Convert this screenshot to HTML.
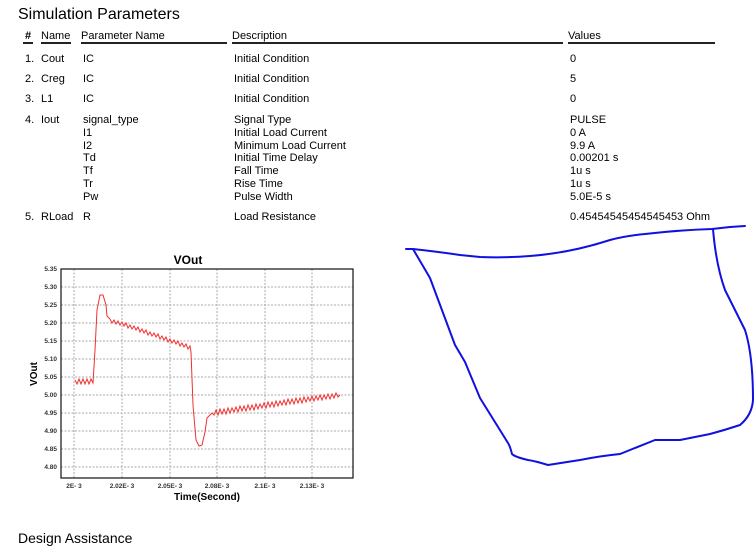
<!DOCTYPE html>
<html><head><meta charset="utf-8"><style>
body{margin:0;width:756px;height:536px;overflow:hidden;background:#fff;font-family:"Liberation Sans",Arial,sans-serif;color:#000;position:relative}
.t{position:absolute;font-size:11px;line-height:12.8px;white-space:nowrap}
.h{position:absolute;font-size:11px;top:30px}
.u{position:absolute;top:42px;height:1.5px;background:#222}
</style></head><body>
<div style="position:absolute;left:18px;top:6px;font-size:16px">Simulation Parameters</div>
<div class="h" style="left:25px;font-weight:bold">#</div>
<div class="h" style="left:41px">Name</div>
<div class="h" style="left:81px">Parameter Name</div>
<div class="h" style="left:232px">Description</div>
<div class="h" style="left:568px">Values</div>
<div class="u" style="left:23px;width:10px"></div>
<div class="u" style="left:41px;width:30px"></div>
<div class="u" style="left:81px;width:146px"></div>
<div class="u" style="left:232px;width:331px"></div>
<div class="u" style="left:568px;width:147px"></div>

<div class="t" style="left:25px;top:53px">1.</div><div class="t" style="left:41px;top:53px">Cout</div><div class="t" style="left:83px;top:53px">IC</div><div class="t" style="left:234px;top:53px">Initial Condition</div><div class="t" style="left:570px;top:53px">0</div>
<div class="t" style="left:25px;top:73px">2.</div><div class="t" style="left:41px;top:73px">Creg</div><div class="t" style="left:83px;top:73px">IC</div><div class="t" style="left:234px;top:73px">Initial Condition</div><div class="t" style="left:570px;top:73px">5</div>
<div class="t" style="left:25px;top:93px">3.</div><div class="t" style="left:41px;top:93px">L1</div><div class="t" style="left:83px;top:93px">IC</div><div class="t" style="left:234px;top:93px">Initial Condition</div><div class="t" style="left:570px;top:93px">0</div>
<div class="t" style="left:25px;top:114px">4.</div><div class="t" style="left:41px;top:114px">Iout</div>
<div class="t" style="left:83px;top:114px">signal_type<br>I1<br>I2<br>Td<br>Tf<br>Tr<br>Pw</div>
<div class="t" style="left:234px;top:114px">Signal Type<br>Initial Load Current<br>Minimum Load Current<br>Initial Time Delay<br>Fall Time<br>Rise Time<br>Pulse Width</div>
<div class="t" style="left:570px;top:114px">PULSE<br>0 A<br>9.9 A<br>0.00201 s<br>1u s<br>1u s<br>5.0E-5 s</div>
<div class="t" style="left:25px;top:211px">5.</div><div class="t" style="left:41px;top:211px">RLoad</div><div class="t" style="left:83px;top:211px">R</div><div class="t" style="left:234px;top:211px">Load Resistance</div><div class="t" style="left:570px;top:211px">0.45454545454545453 Ohm</div>

<svg width="756" height="536" style="position:absolute;left:0;top:0" font-family="Liberation Sans,Arial,sans-serif">
<text x="188" y="264" font-size="12" font-weight="bold" text-anchor="middle">VOut</text>
<g stroke="#aaa" stroke-width="1" stroke-dasharray="2,1.5">
<line x1="61" x2="353" y1="287" y2="287"/><line x1="61" x2="353" y1="305" y2="305"/><line x1="61" x2="353" y1="323" y2="323"/><line x1="61" x2="353" y1="341" y2="341"/><line x1="61" x2="353" y1="359" y2="359"/><line x1="61" x2="353" y1="377" y2="377"/><line x1="61" x2="353" y1="395" y2="395"/><line x1="61" x2="353" y1="413" y2="413"/><line x1="61" x2="353" y1="431" y2="431"/><line x1="61" x2="353" y1="449" y2="449"/><line x1="61" x2="353" y1="467" y2="467"/>
<line y1="269" y2="478" x1="74" x2="74"/><line y1="269" y2="478" x1="122" x2="122"/><line y1="269" y2="478" x1="170" x2="170"/><line y1="269" y2="478" x1="217" x2="217"/><line y1="269" y2="478" x1="265" x2="265"/><line y1="269" y2="478" x1="312" x2="312"/>
</g>
<rect x="61" y="269" width="292" height="209" fill="none" stroke="#111" stroke-width="1.2"/>
<g font-size="6.5" font-weight="bold" fill="#333" text-anchor="end">
<text x="57" y="271">5.35</text><text x="57" y="289">5.30</text><text x="57" y="307">5.25</text><text x="57" y="325">5.20</text><text x="57" y="343">5.15</text><text x="57" y="361">5.10</text><text x="57" y="379">5.05</text><text x="57" y="397">5.00</text><text x="57" y="415">4.95</text><text x="57" y="433">4.90</text><text x="57" y="451">4.85</text><text x="57" y="469">4.80</text>
</g>
<g font-size="6.5" font-weight="bold" fill="#333" text-anchor="middle">
<text x="74" y="488">2E- 3</text><text x="122" y="488">2.02E- 3</text><text x="170" y="488">2.05E- 3</text><text x="217" y="488">2.08E- 3</text><text x="265" y="488">2.1E- 3</text><text x="312" y="488">2.13E- 3</text>
</g>
<text x="207" y="500" font-size="10" font-weight="bold" text-anchor="middle">Time(Second)</text>
<text x="0" y="0" font-size="10" font-weight="bold" text-anchor="middle" transform="translate(37,374) rotate(-90)">VOut</text>
<polyline fill="none" stroke="#f03030" stroke-width="1" points="75,380 77,384 79,379 81,384 83,379 85,384 87,379 89,384 91,379 93,383 95,350 97,310 100,295 103,295 106,305 107,316 110,319 112,323 114,320 116,324 118,321 120,325 122,322 124,326 126,323 128,328 130,325 132,329 134,326 136,330 138,327 140,332 142,329 144,333 146,330 148,335 150,332 152,336 154,333 156,337 158,334 160,339 162,336 164,340 166,337 168,342 170,339 172,343 174,340 176,344 178,341 180,346 182,343 184,347 186,344 188,349 190,346 191,352 193,405 196,440 199,446 202,445 205,432 207,418 210,415 212,413 214,415 216,410 218,415 220,409 222,414 224,409 226,414 228,408 230,413 232,408 234,412 236,407 238,412 240,406 242,411 244,406 246,411 248,405 250,410 252,405 254,410 256,404 258,409 260,404 262,408 264,403 266,408 268,402 270,407 272,402 274,407 276,401 278,406 280,401 282,405 284,400 286,405 288,399 290,404 292,399 294,404 296,398 298,403 300,398 302,403 304,397 306,402 308,397 310,401 312,396 314,401 316,396 318,400 320,395 322,400 324,395 326,399 328,394 330,399 332,394 334,398 336,393 338,397 340,395"/>
<g fill="none" stroke="#1010e0" stroke-width="2" stroke-linecap="round" stroke-linejoin="round">
<path d="M406,249 L413,249 Q440,252 460,255 Q470,256 480,257 Q505,258 530,256 Q570,253 610,240 Q625,236 645,234 Q680,230 712,229 L730,227 L745,226"/>
<path d="M713,229 Q716,265 725,290 L745,330 Q753,355 753,400 Q752,415 740,425 Q725,430 710,434 L680,440 Q665,440 655,440 Q640,446 620,454 Q600,456 580,460 L548,465 Q535,461 528,460 Q515,457 512,454 Q510,446 508,443 L480,398 L465,362 Q458,350 455,345 L430,278 L413,249"/>
</g>
</svg>
<div style="position:absolute;left:18px;top:530px;font-size:14px">Design Assistance</div>
</body></html>
